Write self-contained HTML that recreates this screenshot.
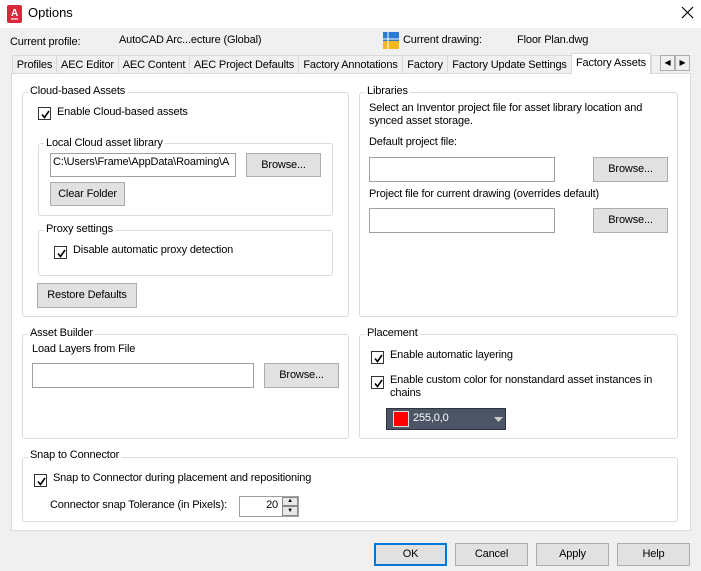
<!DOCTYPE html>
<html><head><meta charset="utf-8"><style>
*{box-sizing:border-box;margin:0;padding:0}
body{width:701px;height:571px;background:#f0f0f0;font-family:"Liberation Sans",sans-serif;font-size:11px;letter-spacing:-0.15px;color:#000;position:relative;overflow:hidden}
.a{position:absolute;white-space:nowrap}
.title{position:absolute;left:0;top:0;width:701px;height:28px;background:#fff}
.panel{position:absolute;left:11px;top:73px;width:680px;height:458px;background:#fff;border:1px solid #d9d9d9}
.grp{position:absolute;border:1px solid #dcdcdc;border-radius:3px}
.lbl{position:absolute;background:#fff;padding:0 2px;white-space:nowrap;line-height:14px}
.tb{position:absolute;background:#fff;border:1px solid #a0a0a0}
.btn{position:absolute;background:#e1e1e1;border:1px solid #adadad;text-align:center;line-height:22px}
.cb{position:absolute;width:13px;height:13px;border:1px solid #333;background:#fff}
.cb svg{position:absolute;left:1px;top:1px}
.tab{position:absolute;top:55px;height:19px;background:#f0f0f0;border:1px solid #d9d9d9;border-bottom:none;text-align:center;line-height:18px;white-space:nowrap;overflow:hidden}
</style></head><body>
<div class="title"></div>
<svg class="a" style="left:7px;top:5px" width="16" height="18"><rect width="15" height="18" rx="2" fill="#d42a3a"/><text x="7.5" y="11" font-size="10" font-weight="bold" fill="#fff" text-anchor="middle" font-family="Liberation Sans">A</text><rect x="4" y="13" width="7" height="2" fill="#fff" opacity=".6"/></svg>
<div class="a" style="left:28px;top:5px;font-size:13px;letter-spacing:0">Options</div>
<svg class="a" style="left:681px;top:6px" width="13" height="13"><path d="M1 1L12 12M12 1L1 12" stroke="#000" stroke-width="1.2"/></svg>

<div class="a" style="left:10px;top:36px">Current profile:</div>
<div class="a" style="left:119px;top:34px">AutoCAD Arc...ecture (Global)</div>
<svg class="a" style="left:383px;top:32px" width="16" height="17"><rect x="0" y="0" width="16" height="9" fill="#2c7bd4"/><rect x="0" y="9" width="16" height="8" fill="#f3b81f"/><path d="M5 0V17M0 7H16" stroke="#fff" stroke-width="1"/></svg>
<div class="a" style="left:403px;top:34px">Current drawing:</div>
<div class="a" style="left:517px;top:34px">Floor Plan.dwg</div>

<div class="tab" style="left:12px;width:45px">Profiles</div>
<div class="tab" style="left:56px;width:63px">AEC Editor</div>
<div class="tab" style="left:118px;width:72px">AEC Content</div>
<div class="tab" style="left:189px;width:110px">AEC Project Defaults</div>
<div class="tab" style="left:298px;width:105px">Factory Annotations</div>
<div class="tab" style="left:402px;width:46px">Factory</div>
<div class="tab" style="left:447px;width:125px">Factory Update Settings</div>
<div class="tab" style="left:651px;width:12px"></div>
<div class="panel"></div>
<div class="tab" style="left:571px;top:53px;height:21px;width:80px;background:#fff;line-height:18px">Factory Assets</div>
<div class="a" style="left:660px;top:55px;width:15px;height:16px;border:1px solid #adadad;background:#f0f0f0;font-size:8px;text-align:center;line-height:14px">◀</div>
<div class="a" style="left:675px;top:55px;width:15px;height:16px;border:1px solid #adadad;background:#f0f0f0;font-size:8px;text-align:center;line-height:14px">▶</div>

<!-- Cloud-based Assets -->
<div class="grp" style="left:22px;top:92px;width:327px;height:225px"></div>
<div class="lbl" style="left:28px;top:84px">Cloud-based Assets</div>
<div class="cb" style="left:38px;top:107px"><svg width="11" height="11"><path d="M2 5.5L4.5 8.5L9 2" stroke="#000" stroke-width="1.6" fill="none"/></svg></div>
<div class="a" style="left:57px;top:106px">Enable Cloud-based assets</div>
<div class="grp" style="left:38px;top:143px;width:295px;height:73px"></div>
<div class="lbl" style="left:44px;top:136px">Local Cloud asset library</div>
<div class="tb" style="left:50px;top:153px;width:186px;height:24px;overflow:hidden;padding:2px 0 0 2px">C:\Users\Frame\AppData\Roaming\A</div>
<div class="btn" style="left:246px;top:153px;width:75px;height:24px">Browse...</div>
<div class="btn" style="left:50px;top:182px;width:75px;height:24px">Clear Folder</div>
<div class="grp" style="left:38px;top:230px;width:295px;height:46px"></div>
<div class="lbl" style="left:44px;top:222px">Proxy settings</div>
<div class="cb" style="left:54px;top:246px"><svg width="11" height="11"><path d="M2 5.5L4.5 8.5L9 2" stroke="#000" stroke-width="1.6" fill="none"/></svg></div>
<div class="a" style="left:73px;top:244px">Disable automatic proxy detection</div>
<div class="btn" style="left:37px;top:283px;width:100px;height:25px">Restore Defaults</div>

<!-- Libraries -->
<div class="grp" style="left:359px;top:92px;width:319px;height:225px"></div>
<div class="lbl" style="left:365px;top:84px">Libraries</div>
<div class="a" style="left:369px;top:102px;line-height:13px">Select an Inventor project file for asset library location and<br>synced asset storage.</div>
<div class="a" style="left:369px;top:136px">Default project file:</div>
<div class="tb" style="left:369px;top:157px;width:186px;height:25px"></div>
<div class="btn" style="left:593px;top:157px;width:75px;height:25px">Browse...</div>
<div class="a" style="left:369px;top:188px">Project file for current drawing (overrides default)</div>
<div class="tb" style="left:369px;top:208px;width:186px;height:25px"></div>
<div class="btn" style="left:593px;top:208px;width:75px;height:25px">Browse...</div>

<!-- Asset Builder -->
<div class="grp" style="left:22px;top:334px;width:327px;height:105px"></div>
<div class="lbl" style="left:28px;top:326px">Asset Builder</div>
<div class="a" style="left:32px;top:343px">Load Layers from File</div>
<div class="tb" style="left:32px;top:363px;width:222px;height:25px"></div>
<div class="btn" style="left:264px;top:363px;width:75px;height:25px">Browse...</div>

<!-- Placement -->
<div class="grp" style="left:359px;top:334px;width:319px;height:105px"></div>
<div class="lbl" style="left:365px;top:326px">Placement</div>
<div class="cb" style="left:371px;top:351px"><svg width="11" height="11"><path d="M2 5.5L4.5 8.5L9 2" stroke="#000" stroke-width="1.6" fill="none"/></svg></div>
<div class="a" style="left:390px;top:349px">Enable automatic layering</div>
<div class="cb" style="left:371px;top:376px"><svg width="11" height="11"><path d="M2 5.5L4.5 8.5L9 2" stroke="#000" stroke-width="1.6" fill="none"/></svg></div>
<div class="a" style="left:390px;top:374px;line-height:13px">Enable custom color for nonstandard asset instances in<br>chains</div>
<div class="a" style="left:386px;top:408px;width:120px;height:22px;background:#4b5565;border:1px solid #2d3440"></div>
<div class="a" style="left:393px;top:411px;width:16px;height:16px;background:#f00;border:1px solid #ddd"></div>
<div class="a" style="left:413px;top:412px;color:#fff">255,0,0</div>
<svg class="a" style="left:494px;top:417px" width="9" height="5"><path d="M0 0H9L4.5 5Z" fill="#ccc"/></svg>

<!-- Snap -->
<div class="grp" style="left:22px;top:457px;width:656px;height:65px"></div>
<div class="lbl" style="left:28px;top:448px">Snap to Connector</div>
<div class="cb" style="left:34px;top:474px"><svg width="11" height="11"><path d="M2 5.5L4.5 8.5L9 2" stroke="#000" stroke-width="1.6" fill="none"/></svg></div>
<div class="a" style="left:53px;top:472px">Snap to Connector during placement and repositioning</div>
<div class="a" style="left:50px;top:499px">Connector snap Tolerance (in Pixels):</div>
<div class="tb" style="left:239px;top:496px;width:60px;height:21px"></div>
<div class="a" style="left:264px;top:499px;width:14px;text-align:right">20</div>
<div class="a" style="left:282px;top:497px;width:16px;height:9px;border:1px solid #888;background:#e8e8e8;font-size:6px;text-align:center;line-height:7px">▲</div>
<div class="a" style="left:282px;top:506px;width:16px;height:10px;border:1px solid #888;background:#e8e8e8;font-size:6px;text-align:center;line-height:8px">▼</div>

<!-- Bottom buttons -->
<div class="btn" style="left:374px;top:543px;width:73px;height:23px;border:2px solid #0078d7;line-height:19px">OK</div>
<div class="btn" style="left:455px;top:543px;width:73px;height:23px;line-height:21px">Cancel</div>
<div class="btn" style="left:536px;top:543px;width:73px;height:23px;line-height:21px">Apply</div>
<div class="btn" style="left:617px;top:543px;width:73px;height:23px;line-height:21px">Help</div>
</body></html>
